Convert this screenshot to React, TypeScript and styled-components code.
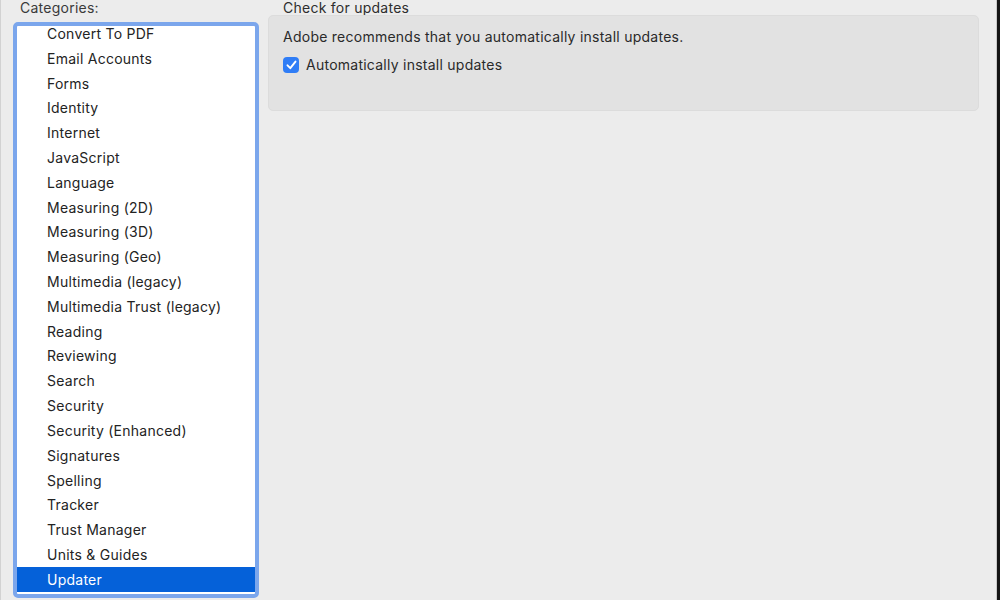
import React from "react";
import styled, { createGlobalStyle } from "styled-components";

const Global = createGlobalStyle`
  html, body { margin: 0; padding: 0; }
  body {
    background: #ececec;
    font-family: Inter, "Noto Sans", "Liberation Sans", sans-serif;
    -webkit-font-smoothing: antialiased;
  }
`;

const Window = styled.div`
  width: 1000px;
  height: 600px;
  box-sizing: border-box;
  display: flex;
  background: #ececec;
  border-left: 1px solid #d2d2d2;
  overflow: hidden;
`;

const Content = styled.div`
  flex: 1;
  display: flex;
  gap: 9px;
  padding-left: 12px;
`;

const EdgeStrip = styled.div`
  width: 3px;
  background: #141414;
  border-left: 1px solid #c9c9c9;
`;

const LeftColumn = styled.div`
  width: 246px;
  display: flex;
  flex-direction: column;
`;

const Label = styled.div`
  font-size: 14px;
  line-height: 16px;
  color: #3a3a3a;
  padding-left: 7px;
  height: 22px;
  letter-spacing: 0.25px;
`;

const ListRing = styled.div`
  flex: 1;
  border: 4px solid #7ba6ec;
  border-radius: 5px;
  background: #fff;
  overflow: hidden;
  margin-bottom: 2px;
  padding-bottom: 2px;
`;

const ListInner = styled.div`
  margin-top: -5px;
`;

const Row = styled.div<{ $selected?: boolean }>`
  height: 24.82px;
  display: flex;
  align-items: center;
  padding-left: 30px;
  font-size: 14px;
  letter-spacing: 0.25px;
  color: ${(p) => (p.$selected ? "#ffffff" : "#232323")};
  background: ${(p) => (p.$selected ? "#0561d9" : "transparent")};
`;

const RightColumn = styled.div`
  width: 711px;
  display: flex;
  flex-direction: column;
`;

const SectionTitle = styled.div`
  font-size: 14px;
  line-height: 16px;
  color: #2e2e2e;
  padding-left: 15px;
  height: 15px;
  letter-spacing: 0.25px;
`;

const GroupBox = styled.div`
  height: 96px;
  box-sizing: border-box;
  background: #e2e2e2;
  border: 1px solid #dcdcdc;
  border-radius: 5px;
  padding: 12px 14px 0 14px;
  display: flex;
  flex-direction: column;
  gap: 11px;
`;

const Text = styled.div`
  font-size: 14px;
  line-height: 17px;
  color: #2a2a2a;
  letter-spacing: 0.25px;
`;

const CheckRow = styled.label`
  display: flex;
  align-items: center;
  gap: 7px;
  font-size: 14px;
  color: #2a2a2a;
  letter-spacing: 0.25px;
`;

const CheckBox = styled.span`
  width: 16px;
  height: 16px;
  border-radius: 4px;
  background: #2f7df6;
  display: flex;
  align-items: center;
  justify-content: center;
`;

const items = [
  "Convert To PDF",
  "Email Accounts",
  "Forms",
  "Identity",
  "Internet",
  "JavaScript",
  "Language",
  "Measuring (2D)",
  "Measuring (3D)",
  "Measuring (Geo)",
  "Multimedia (legacy)",
  "Multimedia Trust (legacy)",
  "Reading",
  "Reviewing",
  "Search",
  "Security",
  "Security (Enhanced)",
  "Signatures",
  "Spelling",
  "Tracker",
  "Trust Manager",
  "Units & Guides",
  "Updater",
];

export default function App() {
  return (
    <>
      <Global />
      <Window>
        <Content>
          <LeftColumn>
            <Label>Categories:</Label>
            <ListRing>
              <ListInner>
                {items.map((it) => (
                  <Row key={it} $selected={it === "Updater"}>
                    {it}
                  </Row>
                ))}
              </ListInner>
            </ListRing>
          </LeftColumn>
          <RightColumn>
            <SectionTitle>Check for updates</SectionTitle>
            <GroupBox>
              <Text>Adobe recommends that you automatically install updates.</Text>
              <CheckRow>
                <CheckBox>
                  <svg width="11" height="10" viewBox="0 0 11 10">
                    <path d="M1.5 5.3 L4.3 8.2 L9.5 1.6" fill="none" stroke="#fff" strokeWidth="1.9" strokeLinecap="round" strokeLinejoin="round" />
                  </svg>
                </CheckBox>
                Automatically install updates
              </CheckRow>
            </GroupBox>
          </RightColumn>
        </Content>
        <EdgeStrip />
      </Window>
    </>
  );
}
